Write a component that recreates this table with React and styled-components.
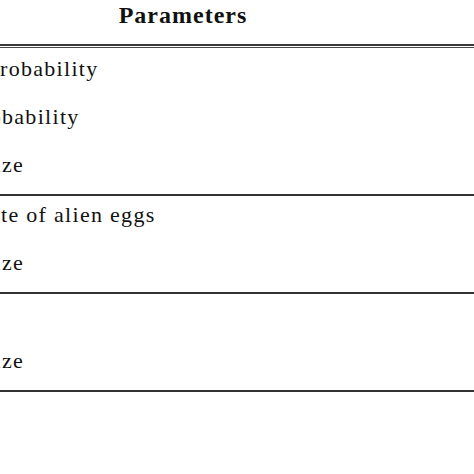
import React from "react";
import styled, { createGlobalStyle } from "styled-components";

const GlobalStyle = createGlobalStyle`
  html, body {
    margin: 0;
    padding: 0;
    background: #ffffff;
  }
  body {
    width: 474px;
    height: 474px;
    overflow: hidden;
    font-family: "Liberation Serif", "Times New Roman", serif;
    color: #111111;
  }
`;

const groups = [
  [
    { cut: "Crossover p", text: "robability", x: 0 },
    { cut: "Mutation pro", text: "bability", x: 2 },
    { cut: "Population si", text: "ze", x: 2 },
  ],
  [
    { cut: "Discovery ra", text: "te of alien eggs", x: 1 },
    { cut: "Population si", text: "ze", x: 2 },
  ],
  [
    { cut: "", text: "", x: 0 },
    { cut: "Population si", text: "ze", x: 2 },
  ],
];

const App = () => {
  return (
    <>
      <GlobalStyle />
      <StTable>
        <StHeaderRow>
          <StHeaderCell>Parameters</StHeaderCell>
        </StHeaderRow>
        <StThinRule />
        <StBody>
          {groups.map((rows, gi) => (
            <StGroup key={gi}>
              {rows.map((row, ri) => (
                <StRow key={ri}>
                  <StLabel $x={row.x}>
                    {row.cut && <StCut>{row.cut}</StCut>}
                    {row.text || "\u00a0"}
                  </StLabel>
                </StRow>
              ))}
            </StGroup>
          ))}
        </StBody>
      </StTable>
    </>
  );
};

export default App;

const StTable = styled.div`
  width: 474px;
  display: flex;
  flex-direction: column;
  overflow: hidden;
`;

const StHeaderRow = styled.div`
  display: flex;
  height: 46px;
  box-sizing: border-box;
  padding-top: 3px;
  border-bottom: 2px solid #3a3a3a;
`;

const StHeaderCell = styled.div`
  width: 366px;
  text-align: center;
  font-weight: 700;
  font-size: 24px;
  line-height: 24px;
  letter-spacing: 1px;
  color: #111111;
`;

const StThinRule = styled.div`
  height: 1px;
  margin-top: 1px;
  background: #4a4a4a;
`;

const StBody = styled.div`
  display: flex;
  flex-direction: column;
  padding-top: 2px;
`;

const StGroup = styled.div`
  display: flex;
  flex-direction: column;
  border-bottom: 2px solid #333333;
`;

const StRow = styled.div`
  height: 48px;
  box-sizing: border-box;
  padding-top: 7px;
  display: flex;
`;

const StLabel = styled.span`
  position: relative;
  margin-left: ${(props) => props.$x}px;
  font-size: 22px;
  line-height: 24px;
  letter-spacing: 1.3px;
  white-space: nowrap;
  color: #111111;
`;

const StCut = styled.span`
  position: absolute;
  right: 100%;
  top: 0;
  white-space: nowrap;
`;
